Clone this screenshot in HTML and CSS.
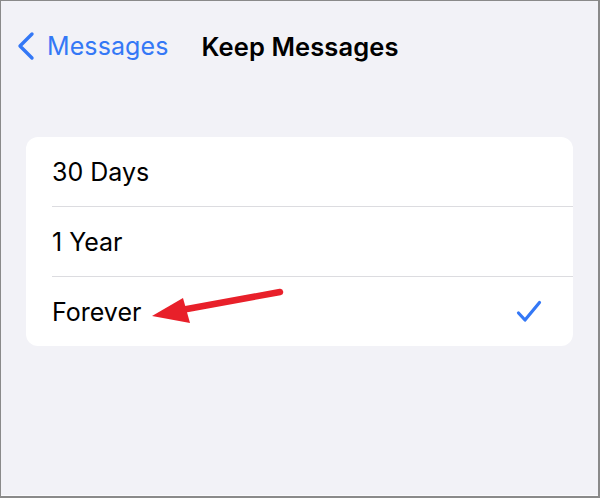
FILE: index.html
```html
<!DOCTYPE html>
<html>
<head>
<meta charset="utf-8">
<link rel="stylesheet" href="styles.css">
</head>
<body>
<div class="frame">
  <header class="nav">
    <a class="back">
      <svg class="chev" width="20" height="30" viewBox="0 0 20 30"><path d="M16 3 L4 15 L16 27" fill="none" stroke="#3478f6" stroke-width="3.4" stroke-linecap="round" stroke-linejoin="round"/></svg>
      <span class="back-label">Messages</span>
    </a>
    <h1 class="title">Keep Messages</h1>
  </header>
  <div class="card">
    <div class="row"><span class="label">30 Days</span></div>
    <div class="row"><span class="label">1 Year</span></div>
    <div class="row"><span class="label">Forever</span>
      <svg class="check" width="26" height="24" viewBox="0 0 26 24"><path d="M2.5 13 L9 20 L23.5 2.5" fill="none" stroke="#3478f6" stroke-width="3.2" stroke-linecap="round" stroke-linejoin="round"/></svg>
    </div>
    <svg class="arrow" width="547" height="209" viewBox="0 0 547 209"><path d="M254 155 L150 174" stroke="#e8202a" stroke-width="6.5" stroke-linecap="round" fill="none"/><polygon points="126,179 157,161 164,186" fill="#e8202a"/></svg>
  </div>
</div>
</body>
</html>
```
FILE: styles.css
```css
* { box-sizing: border-box; }
html, body { margin: 0; padding: 0; }
body { font-family: Inter, "Noto Sans", "Liberation Sans", sans-serif; }
.frame {
  width: 600px;
  height: 498px;
  background: #f2f2f7;
  border: 1px solid #8a8a8a;
  border-right-width: 2px;
  border-bottom-width: 2px;
  box-shadow: inset 0 -1px 0 #fbfbfd;
}
.nav {
  display: flex;
  align-items: center;
  height: 90px;
  padding: 0 0 0 15px;
}
.back {
  display: flex;
  align-items: center;
  color: #3478f6;
}
.chev { display: block; margin-right: 11px; }
.back-label { font-size: 25px; letter-spacing: 0.1px; }
.title {
  margin: 0 0 0 33px;
  font-size: 25.5px;
  font-weight: 600;
  color: #000;
  letter-spacing: 0.1px;
}
.card {
  position: relative;
  margin: 46px 25px 0 25px;
  background: #fff;
  border-radius: 12px;
  padding-left: 26px;
}
.row {
  display: flex;
  align-items: center;
  justify-content: space-between;
  height: 70px;
  border-bottom: 1px solid #dcdce0;
  padding-right: 31px;
}
.row:last-of-type { border-bottom: none; height: 69px; }
.label { font-size: 25px; color: #000; }
.check { display: block; }
.arrow { position: absolute; left: 0; top: 0; }
```
